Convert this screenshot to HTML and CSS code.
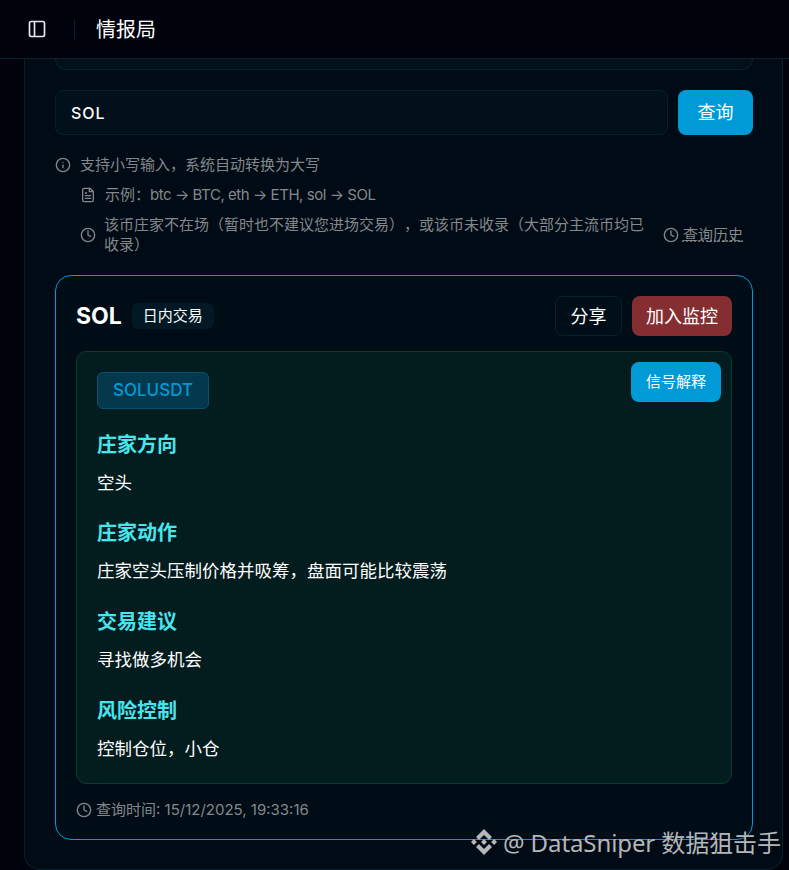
FILE: index.html
```html
<!DOCTYPE html>
<html lang="zh-CN">
<head>
  <meta charset="UTF-8" />
  <meta name="viewport" content="width=device-width, initial-scale=1.0" />
  <title>情报局</title>
  <link rel="stylesheet" href="styles.css">
</head>
<body>
  <header class="topbar">
    <svg class="sidebar-icon" viewBox="0 0 24 24" width="20" height="20" fill="none" stroke="currentColor" stroke-width="2">
      <rect x="3" y="3" width="18" height="18" rx="2"/>
      <path d="M9 3v18"/>
    </svg>
    <span class="topbar-sep"></span>
    <h1>情报局</h1>
  </header>

  <main class="page">
    <section class="panel">
      <div class="clipped-box"></div>

      <div class="search-row">
        <div class="search-input">SOL</div>
        <button class="btn-primary">查询</button>
      </div>

      <div class="hints">
        <p class="hint">
          <svg class="icon" viewBox="0 0 24 24"><circle cx="12" cy="12" r="10"/><path d="M12 16v-4M12 8h.01"/></svg>
          支持小写输入，系统自动转换为大写
        </p>
        <p class="hint hint-sub">
          <svg class="icon" viewBox="0 0 24 24"><path d="M15 2H6a2 2 0 0 0-2 2v16a2 2 0 0 0 2 2h12a2 2 0 0 0 2-2V7z"/><path d="M14 2v5h6M16 13H8M16 17H8M10 9H8"/></svg>
          <span>示例：<span class="tight">btc → BTC, eth → ETH, sol → SOL</span></span>
        </p>
        <div class="hint-row">
          <p class="hint hint-sub hint-wrap">
            <svg class="icon" viewBox="0 0 24 24"><circle cx="12" cy="12" r="10"/><path d="M12 6v6l4 2"/></svg>
            <span>该币庄家不在场（暂时也不建议您进场交易），或该币未收录（大部分主流币均已收录）</span>
          </p>
          <a class="history">
            <svg class="icon" viewBox="0 0 24 24"><circle cx="12" cy="12" r="10"/><path d="M12 6v6l4 2"/></svg>
            <span class="history-label">查询历史</span>
          </a>
        </div>
      </div>

      <article class="result">
        <div class="result-head">
          <div class="result-title">
            <strong>SOL</strong>
            <span class="tag">日内交易</span>
          </div>
          <div class="result-actions">
            <button class="btn-ghost">分享</button>
            <button class="btn-danger">加入监控</button>
          </div>
        </div>

        <div class="signal">
          <button class="btn-explain">信号解释</button>
          <span class="symbol">SOLUSDT</span>

          <h3>庄家方向</h3>
          <p>空头</p>
          <h3>庄家动作</h3>
          <p>庄家空头压制价格并吸筹，盘面可能比较震荡</p>
          <h3>交易建议</h3>
          <p>寻找做多机会</p>
          <h3>风险控制</h3>
          <p>控制仓位，小仓</p>
        </div>

        <div class="query-time">
          <svg class="icon" viewBox="0 0 24 24"><circle cx="12" cy="12" r="10"/><path d="M12 6v6l4 2"/></svg>
          查询时间: 15/12/2025, 19:33:16
        </div>
      </article>
    </section>
  </main>

  <div class="watermark">
    <svg viewBox="0 0 126.61 126.61" width="26" height="28" fill="currentColor">
      <path d="M38.73 53.2l24.59-24.58 24.6 24.6 14.3-14.31L63.32 0 24.43 38.9zM0 63.31l14.3-14.31 14.31 14.31-14.31 14.3zM38.73 73.41l24.59 24.59 24.6-24.6 14.31 14.29-38.9 38.91-38.91-38.88zM97.99 63.31l14.3-14.31 14.32 14.3-14.31 14.32zM77.83 63.3L63.32 48.78 48.81 63.28l14.51 14.5z"/>
    </svg>
    <span>@ DataSniper 数据狙击手</span>
  </div>
</body>
</html>
```

FILE: styles.css
```css
:root {
  --bg: #00030c;
  --panel: #000b15;
  --field: #01101a;
  --line: #06202d;
  --primary: #009bd7;
  --muted: #84888b;
  --cyan: #48e5ee;
}

* {
  box-sizing: border-box;
}

html, body {
  height: 870px;
  overflow: hidden;
}

body {
  margin: 0;
  background-color: var(--bg);
  color: #fff;
  font-family: Inter, "Noto Sans CJK SC", sans-serif;
  text-spacing-trim: space-all;
}

p, h1, h3 {
  margin: 0;
}

button {
  border: none;
  padding: 0 0 3px;
  color: #fff;
  font-family: inherit;
  cursor: pointer;
}

.topbar {
  display: flex;
  align-items: center;
  height: 59px;
  padding-left: 27px;
  border-bottom: 1px solid var(--line);
}

.sidebar-icon {
  color: #e8eaec;
}

.topbar-sep {
  width: 1px;
  height: 20px;
  margin: 0 21px 0 27px;
  background-color: var(--line);
}

.topbar h1 {
  margin-bottom: 2px;
  font-size: 20px;
  font-weight: 400;
}

.page {
  padding: 0 6px 0 24px;
}

.panel {
  height: 811px;
  padding: 0 29px 0 30px;
  background-color: var(--panel);
  border: 1px solid var(--line);
  border-top: none;
  border-radius: 0 0 16px 16px;
}

.clipped-box {
  height: 11px;
  background-color: var(--field);
  border: 1px solid var(--line);
  border-top: none;
  border-radius: 0 0 12px 12px;
}

.search-row {
  display: flex;
  gap: 10px;
  margin-top: 20px;
}

.search-input {
  flex: 1;
  height: 45px;
  padding: 0 15px;
  line-height: 44px;
  font-size: 16px;
  font-weight: 500;
  letter-spacing: 1px;
  background-color: var(--field);
  border: 1px solid var(--line);
  border-radius: 8px;
}

.btn-primary {
  width: 75px;
  height: 45px;
  font-size: 18px;
  background-color: var(--primary);
  border-radius: 8px;
}

.icon {
  flex: none;
  width: 16px;
  height: 16px;
  fill: none;
  stroke: currentColor;
  stroke-width: 2;
  stroke-linecap: round;
  stroke-linejoin: round;
}

.hints {
  margin-top: 20px;
  font-size: 15px;
  color: var(--muted);
}

.hint {
  display: flex;
  align-items: center;
  gap: 9px;
  line-height: 20px;
}

.hint-sub {
  margin-top: 10px;
  padding-left: 25px;
}

.tight {
  letter-spacing: -0.45px;
}

.hint-row {
  display: flex;
  align-items: center;
  justify-content: space-between;
}

.hint-wrap {
  gap: 8px;
  width: 592px;
}

.history {
  display: flex;
  align-items: center;
  gap: 4px;
  margin-top: 10px;
  margin-right: 10px;
  line-height: 20px;
}

.history-label {
  text-decoration: underline dotted;
}

.result {
  margin-top: 20px;
  height: 565px;
  padding: 20px;
  border: 1px solid var(--primary);
  border-radius: 16px;
  background-color: #000c16;
}

.result-head {
  display: flex;
  align-items: center;
  justify-content: space-between;
  height: 40px;
}

.result-title {
  display: flex;
  align-items: center;
  gap: 10px;
}

.result-title strong {
  font-size: 23px;
  font-weight: 700;
}

.tag {
  padding: 0 11px;
  font-size: 15px;
  line-height: 26px;
  background-color: #021825;
  border-radius: 6px;
}

.result-actions {
  display: flex;
  gap: 10px;
}

.btn-ghost, .btn-danger {
  height: 40px;
  font-size: 18px;
  border-radius: 8px;
}

.btn-ghost {
  width: 67px;
  background-color: #000e18;
  border: 1px solid var(--line);
}

.btn-danger {
  width: 100px;
  background-color: #842e32;
}

.signal {
  position: relative;
  height: 433px;
  margin-top: 15px;
  padding: 20px;
  background-color: #031c1e;
  border: 1px solid #0b3a2e;
  border-radius: 10px;
}

.btn-explain {
  position: absolute;
  top: 10px;
  right: 10px;
  width: 90px;
  height: 40px;
  font-size: 15px;
  background-color: var(--primary);
  border-radius: 8px;
}

.symbol {
  display: inline-block;
  width: 112px;
  height: 37px;
  line-height: 35px;
  text-align: center;
  font-size: 17px;
  font-weight: 500;
  color: var(--primary);
  background-color: #03384d;
  border: 1px solid #09506f;
  border-radius: 6px;
}

.signal h3 {
  margin-top: 17.7px;
  font-size: 20px;
  font-weight: 700;
  line-height: 36px;
  color: var(--cyan);
}

.signal p {
  margin-top: 5px;
  font-size: 17.5px;
  line-height: 30px;
}

.query-time {
  display: flex;
  align-items: center;
  gap: 4px;
  margin-top: 16px;
  font-size: 15px;
  line-height: 20px;
  color: var(--muted);
}

.watermark {
  position: absolute;
  left: 471px;
  top: 824px;
  display: flex;
  align-items: center;
  gap: 6px;
  font-family: "Noto Sans", "Noto Sans CJK SC", sans-serif;
  font-size: 24px;
  letter-spacing: -0.1px;
  color: #b4b6b8;
}
```
